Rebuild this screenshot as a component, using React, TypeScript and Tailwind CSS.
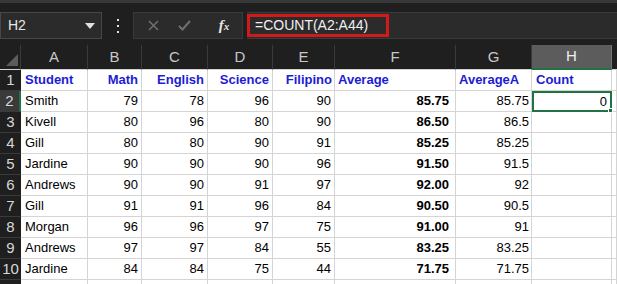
const cols = ["A", "B", "C", "D", "E", "F", "G", "H"];

type Row = { name: string; math: number; eng: number; sci: number; fil: number; avg: string; avgA: string };

const rows: Row[] = [
  { name: "Smith", math: 79, eng: 78, sci: 96, fil: 90, avg: "85.75", avgA: "85.75" },
  { name: "Kivell", math: 80, eng: 96, sci: 80, fil: 90, avg: "86.50", avgA: "86.5" },
  { name: "Gill", math: 80, eng: 80, sci: 90, fil: 91, avg: "85.25", avgA: "85.25" },
  { name: "Jardine", math: 90, eng: 90, sci: 90, fil: 96, avg: "91.50", avgA: "91.5" },
  { name: "Andrews", math: 90, eng: 90, sci: 91, fil: 97, avg: "92.00", avgA: "92" },
  { name: "Gill", math: 91, eng: 91, sci: 96, fil: 84, avg: "90.50", avgA: "90.5" },
  { name: "Morgan", math: 96, eng: 96, sci: 97, fil: 75, avg: "91.00", avgA: "91" },
  { name: "Andrews", math: 97, eng: 97, sci: 84, fil: 55, avg: "83.25", avgA: "83.25" },
  { name: "Jardine", math: 84, eng: 84, sci: 75, fil: 44, avg: "71.75", avgA: "71.75" },
];

const grid = "grid grid-cols-[21px_67px_54px_66px_65px_62px_121px_76px_80px_1fr]";
const cell = "h-[21px] border-r border-b border-[#d4d4d4] bg-white flex items-center truncate";
const head = "h-[21px] border-r border-b border-[#d4d4d4] bg-white flex items-center font-bold text-[#1c1cd4] whitespace-nowrap overflow-hidden";
const rowHead = "h-[21px] bg-[#1f1f1f] border-b border-[#3a3a3a] flex items-center justify-center text-[15px] text-[#d8d8d8]";

const FormulaBar = () => (
  <div className="h-[45px] bg-[#1f1f1f] border-t-[3px] border-[#383838] pt-[9px] flex items-start">
    <div className="w-[102px] h-[27px] bg-[#2b2b2b] border border-[#474747] flex items-center justify-between pl-[7px] pr-[6px] text-[14px] text-[#e6e6e6]">
      <span>H2</span>
      <svg width="10" height="6" viewBox="0 0 10 6">
        <path d="M0 0 L10 0 L5 6 Z" fill="#e0e0e0" />
      </svg>
    </div>
    <div className="w-[31px] h-[27px] flex items-center justify-center">
      <svg width="4" height="14" viewBox="0 0 4 14">
        <rect x="1" y="0" width="2" height="2" fill="#e0e0e0" />
        <rect x="1" y="6" width="2" height="2" fill="#e0e0e0" />
        <rect x="1" y="12" width="2" height="2" fill="#e0e0e0" />
      </svg>
    </div>
    <div className="w-[110px] h-[27px] bg-[#2b2b2b] border border-[#3a3a3a] flex items-center">
      <div className="w-[38px] flex justify-center">
        <svg width="11" height="11" viewBox="0 0 11 11">
          <path d="M1 1 L10 10 M10 1 L1 10" stroke="#707070" strokeWidth="1.5" />
        </svg>
      </div>
      <div className="w-[24px] flex justify-center">
        <svg width="13" height="11" viewBox="0 0 13 11">
          <path d="M1 6 L4.5 9.5 L12 1" stroke="#707070" strokeWidth="2" fill="none" />
        </svg>
      </div>
      <div className="flex-1 flex justify-center pl-[10px] font-['Liberation_Serif',serif] italic text-[15px] text-[#e6e6e6] font-bold">
        f<span className="text-[11px] mt-[4px]">x</span>
      </div>
    </div>
    <div className="flex-1 ml-[4px] h-[27px] bg-[#2b2b2b] border-y border-[#3a3a3a] flex items-center">
      <div className="w-[142px] h-[23px] border-[3px] border-[#d11a1a] flex items-center pl-[5px] text-[14px] text-[#f0f0f0] whitespace-nowrap">
        =COUNT(A2:A44)
      </div>
    </div>
  </div>
);

const ColumnHeader = () => (
  <div className={`${grid} h-[25px] bg-[#1f1f1f]`}>
    <div className="relative border-r border-[#3a3a3a] border-b border-b-[#d4d4d4]">
      <svg className="absolute right-[2px] bottom-[3px]" width="12" height="12" viewBox="0 0 12 12">
        <path d="M12 0 L12 12 L0 12 Z" fill="#5c5c5c" />
      </svg>
    </div>
    {cols.map((c) => (
      <div
        key={c}
        className={
          c === "H"
            ? "flex items-center justify-center bg-[#5c5c5c] text-[15px] text-[#f0f0f0] border-r border-[#777] border-b-2 border-b-[#217346]"
            : "flex items-center justify-center text-[15px] text-[#c8c8c8] border-r border-[#3a3a3a] border-b border-b-[#d4d4d4]"
        }
      >
        {c}
      </div>
    ))}
    <div className="bg-[#1f1f1f] border-b border-b-[#d4d4d4]" />
  </div>
);

export default function App() {
  return (
    <div className="w-[617px] h-[284px] overflow-hidden bg-[#1f1f1f] font-['Liberation_Sans',Arial,sans-serif] text-[13px] text-black">
      <FormulaBar />
      <ColumnHeader />

      <div className={grid}>
        <div className={rowHead}>1</div>
        <div className={`${head} pl-[4px]`}>Student</div>
        <div className={`${head} justify-end pr-[3px]`}>Math</div>
        <div className={`${head} justify-end pr-[3px]`}>English</div>
        <div className={`${head} justify-end pr-[3px]`}>Science</div>
        <div className={`${head} justify-end pr-[2px]`}>Filipino</div>
        <div className={`${head} pl-[3px]`}>Average</div>
        <div className={`${head} pl-[3px]`}>AverageA</div>
        <div className={`${head} pl-[4px]`}>Count</div>
        <div className={cell} />

        {rows.map((r, i) => {
          const n = i + 2;
          const selected = n === 2;
          return [
            <div
              key={`h${n}`}
              className={
                selected
                  ? `${rowHead} bg-[#3a3a3a] border-r-2 border-r-[#217346]`
                  : rowHead
              }
            >
              {n}
            </div>,
            <div key={`a${n}`} className={`${cell} pl-[4px]`}>{r.name}</div>,
            <div key={`b${n}`} className={`${cell} justify-end pr-[3px]`}>{r.math}</div>,
            <div key={`c${n}`} className={`${cell} justify-end pr-[3px]`}>{r.eng}</div>,
            <div key={`d${n}`} className={`${cell} justify-end pr-[3px]`}>{r.sci}</div>,
            <div key={`e${n}`} className={`${cell} justify-end pr-[3px]`}>{r.fil}</div>,
            <div key={`f${n}`} className={`${cell} justify-end pr-[6px] font-bold`}>{r.avg}</div>,
            <div key={`g${n}`} className={`${cell} justify-end pr-[2px]`}>{r.avgA}</div>,
            selected ? (
              <div key={`i${n}`} className="relative h-[21px] bg-white border-2 border-[#217346] flex items-center justify-end pr-[3px]">
                0
                <div className="absolute -right-[3px] -bottom-[3px] w-[5px] h-[5px] bg-[#217346] border border-white" />
              </div>
            ) : (
              <div key={`i${n}`} className={cell} />
            ),
            <div key={`j${n}`} className={cell} />,
          ];
        })}

        <div className={rowHead} />
        {Array.from({ length: 9 }).map((_, k) => (
          <div key={`z${k}`} className={cell} />
        ))}
      </div>
    </div>
  );
}
